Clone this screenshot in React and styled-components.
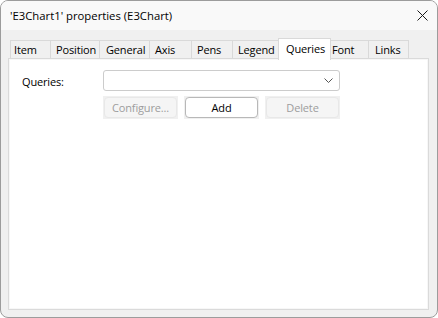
import styled, { createGlobalStyle } from "styled-components";

const GlobalStyle = createGlobalStyle`
  html, body {
    margin: 0;
    padding: 0;
    background: #ffffff;
  }
  body {
    font-family: "Open Sans", "Noto Sans", sans-serif;
    font-size: 11px;
    letter-spacing: -0.15px;
    color: #000;
  }
`;

const Window = styled.div`
  box-sizing: border-box;
  width: 438px;
  height: 318px;
  border: 1px solid #9c9c9c;
  border-radius: 8px;
  background: #f0f0f0;
  display: flex;
  flex-direction: column;
  overflow: hidden;
`;

const TitleBar = styled.div`
  height: 29px;
  flex-shrink: 0;
  background: #f9f9f9;
  display: flex;
  align-items: center;
  justify-content: space-between;
  padding: 0 9px 0 9px;
  font-size: 11.3px;
  letter-spacing: 0;
`;

const CloseButton = styled.div`
  width: 12px;
  height: 12px;
  display: flex;
  align-items: center;
  justify-content: center;
`;

const Body = styled.div`
  flex: 1;
  display: flex;
  flex-direction: column;
  padding: 8px 8px 7px 7px;
`;

const TabStrip = styled.div`
  display: flex;
  align-items: flex-end;
  height: 21px;
  padding-left: 2px;
  flex-shrink: 0;
`;

const Tab = styled.div`
  box-sizing: border-box;
  width: ${(p) => p.$w}px;
  height: ${(p) => (p.$active ? 22 : 19)}px;
  margin: ${(p) => (p.$active ? "0 -2px -1px -2px" : "0")};
  position: relative;
  z-index: ${(p) => (p.$active ? 2 : 1)};
  background: ${(p) => (p.$active ? "#ffffff" : "#f0f0f0")};
  border: 1px solid #d9d9d9;
  border-bottom: ${(p) => (p.$active ? "none" : "1px solid #d9d9d9")};
  margin-left: ${(p) => (p.$first ? "0" : p.$active ? "-2px" : "-1px")};
  display: flex;
  align-items: center;
  padding-left: ${(p) => p.$pl}px;
  padding-bottom: ${(p) => (p.$active ? 3 : 0)}px;
  white-space: nowrap;
`;

const Panel = styled.div`
  flex: 1;
  margin-top: -1px;
  background: #ffffff;
  border: 1px solid #dadada;
  box-shadow: inset 0 0 0 1px #f7f7f7;
  padding: 11px 12px;
  display: grid;
  grid-template-columns: 82px 237px;
  grid-template-rows: 21px 23px;
  row-gap: 5px;
  align-content: start;
`;

const Label = styled.div`
  align-self: center;
  padding-left: 1px;
  padding-top: 2px;
`;

const Combo = styled.div`
  box-sizing: border-box;
  border: 1px solid #cccccc;
  border-radius: 3px;
  background: #ffffff;
  display: flex;
  align-items: center;
  justify-content: flex-end;
  padding-right: 6px;
`;

const ButtonRow = styled.div`
  grid-column: 2;
  display: flex;
  gap: 6px;
`;

const ButtonWrap = styled.div`
  width: 75px;
  height: 23px;
  background: #f0f0f0;
  padding: 1px;
  box-sizing: border-box;
  display: flex;
`;

const Button = styled.div`
  flex: 1;
  box-sizing: border-box;
  border: 1px solid ${(p) => (p.$disabled ? "#e8e8e8" : "#b8b8b8")};
  border-radius: 4px;
  background: ${(p) => (p.$disabled ? "#f5f5f5" : "#ffffff")};
  color: ${(p) => (p.$disabled ? "#9d9d9d" : "#000000")};
  display: flex;
  align-items: center;
  justify-content: center;
`;

const tabs = [
  { label: "Item", w: 41, pl: 3 },
  { label: "Position", w: 50, pl: 5 },
  { label: "General", w: 51, pl: 6 },
  { label: "Axis", w: 43, pl: 5 },
  { label: "Pens", w: 42, pl: 5 },
  { label: "Legend", w: 48, pl: 5 },
  { label: "Queries", w: 53, pl: 7, active: true },
  { label: "Font", w: 41, pl: 3 },
  { label: "Links", w: 41, pl: 6 },
];

export default function App() {
  return (
    <>
      <GlobalStyle />
      <Window>
        <TitleBar>
          <span>'E3Chart1' properties (E3Chart)</span>
          <CloseButton>
            <svg width="11" height="11" viewBox="0 0 11 11">
              <path d="M0.5 0.5 L10.5 10.5 M10.5 0.5 L0.5 10.5" stroke="#1a1a1a" strokeWidth="1" />
            </svg>
          </CloseButton>
        </TitleBar>
        <Body>
          <TabStrip>
            {tabs.map((t, i) => (
              <Tab key={t.label} $w={t.w} $pl={t.pl} $active={t.active} $first={i === 0}>
                {t.label}
              </Tab>
            ))}
          </TabStrip>
          <Panel>
            <Label>Queries:</Label>
            <Combo>
              <svg width="9" height="5" viewBox="0 0 9 5">
                <path d="M0.5 0.5 L4.5 4.5 L8.5 0.5" fill="none" stroke="#555" strokeWidth="1" />
              </svg>
            </Combo>
            <ButtonRow>
              <ButtonWrap>
                <Button $disabled>Configure...</Button>
              </ButtonWrap>
              <ButtonWrap>
                <Button>Add</Button>
              </ButtonWrap>
              <ButtonWrap>
                <Button $disabled>Delete</Button>
              </ButtonWrap>
            </ButtonRow>
          </Panel>
        </Body>
      </Window>
    </>
  );
}
